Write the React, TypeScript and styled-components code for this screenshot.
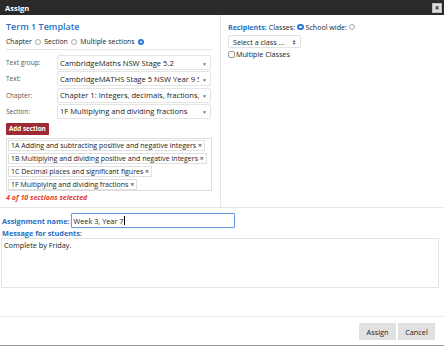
import React from "react";
import styled, { createGlobalStyle } from "styled-components";

const Global = createGlobalStyle`
  html, body { margin: 0; padding: 0; background: #fff; }
  body { font-family: "Open Sans", "Liberation Sans", sans-serif; color: #222; }
  * { box-sizing: border-box; }
`;

const Dialog = styled.div`
  width: 444px;
  height: 346px;
  display: flex;
  flex-direction: column;
  background: #fff;
  border-bottom: 1px solid #9a9a9a;
`;

const TitleBar = styled.div`
  height: 15px;
  background: #2a2a2a;
  display: flex;
  align-items: center;
  justify-content: space-between;
  padding: 0 2px 0 5px;
  color: #fff;
  font-size: 7.5px;
  font-weight: 700;
`;

const CloseBtn = styled.div`
  width: 10px;
  height: 10px;
  background: #dcdcdc;
  border: 1px solid #bbb;
  color: #222;
  font-size: 8px;
  line-height: 8px;
  text-align: center;
  font-weight: 700;
`;

const Top = styled.div`
  display: flex;
  height: 193px;
  border-bottom: 1px solid #e6e6e6;
`;

const LeftPanel = styled.div`
  width: 221px;
  border-right: 1px solid #e6e6e6;
  padding: 6px 9px 0 6px;
  display: flex;
  flex-direction: column;
`;

const Title = styled.div`
  color: #2a70c4;
  font-size: 9px;
  font-weight: 600;
  line-height: 12px;
`;

const RadioRow = styled.div`
  display: flex;
  align-items: center;
  gap: 3px;
  font-size: 6.9px;
  margin-top: 4px;
  padding-bottom: 2px;
  line-height: 10px;
  border-bottom: 1.5px solid #e3e3e3;
  margin-right: -1px;
`;

const Radio = styled.span<{ $on?: boolean }>`
  display: inline-block;
  width: 6.5px;
  height: 6.5px;
  border-radius: 50%;
  border: ${(p) => (p.$on ? "2px solid #2f78d6" : "1px solid #a9a9a9")};
  background: #fff;
  flex: none;
`;

const Form = styled.div`
  display: flex;
  flex-direction: column;
  gap: 1.3px;
  margin-top: 5px;
`;

const FormRow = styled.div`
  display: flex;
  align-items: center;
  height: 15px;
`;

const Label = styled.div`
  width: 51px;
  font-size: 6.5px;
  color: #555;
`;

const Select = styled.div`
  flex: 1;
  height: 15px;
  border: 1px solid #e4e4e4;
  border-radius: 2px;
  display: flex;
  align-items: center;
  padding: 0 3px 0 2px;
  font-size: 7.6px;
  color: #222;
  overflow: hidden;
`;

const SelectText = styled.span`
  flex: 1;
  min-width: 0;
  white-space: nowrap;
  overflow: hidden;
  margin-right: 2px;
`;

const Caret = styled.span`
  flex: none;
  width: 6px;
  text-align: right;
  font-size: 5px;
  color: #777;
  padding-top: 2px;
`;

const AddBtn = styled.div`
  align-self: flex-start;
  margin-top: 4px;
  background: #9e2a33;
  color: #fff;
  font-size: 6.3px;
  font-weight: 700;
  padding: 0 3px;
  height: 12px;
  line-height: 12px;
  border-radius: 1px;
`;

const SectionBox = styled.div`
  margin-top: 3px;
  height: 53px;
  border: 1px solid #dedede;
  padding: 1px 1px;
  display: flex;
  flex-direction: column;
  align-items: flex-start;
  gap: 1.5px;
  margin-right: -1px;
`;

const Tag = styled.div`
  border: 1px solid #e0e0e0;
  font-size: 7px;
  line-height: 9.5px;
  padding: 0 2px;
  white-space: nowrap;
  background: #fff;
`;

const Note = styled.div`
  color: #e23a2c;
  font-size: 7.1px;
  font-weight: 700;
  font-style: italic;
  margin-top: 1px;
`;

const RightPanel = styled.div`
  flex: 1;
  padding: 7px 0 0 7px;
  display: flex;
  flex-direction: column;
  align-items: flex-start;
`;

const RecRow = styled.div`
  display: flex;
  align-items: center;
  gap: 2px;
  font-size: 7.1px;
  line-height: 10px;
`;

const Blue = styled.span`
  color: #2a6ec4;
  font-weight: 700;
`;

const SmallSelect = styled.div`
  margin-top: 3px;
  width: 73px;
  height: 13px;
  border: 1px solid #e2e2e2;
  border-radius: 2px;
  display: flex;
  align-items: center;
  justify-content: space-between;
  padding: 0 4px 0 4px;
  font-size: 7.2px;
`;

const Arrows = styled.span`
  font-size: 4px;
  line-height: 3px;
  display: flex;
  flex-direction: column;
  color: #444;
`;

const CheckRow = styled.div`
  display: flex;
  align-items: center;
  margin-top: 1px;
  font-size: 7.2px;
  line-height: 10px;
`;

const Check = styled.span`
  width: 7px;
  height: 7px;
  border: 1px solid #999;
  border-radius: 2px;
  margin-right: 1px;
`;

const Bottom = styled.div`
  display: flex;
  flex-direction: column;
  padding: 5px 5px 0 1px;
`;

const NameRow = styled.div`
  display: flex;
  align-items: center;
  gap: 1px;
  padding-left: 1px;
`;

const BlueLabel = styled.div`
  color: #2a6ec4;
  font-weight: 700;
  font-size: 7.3px;
  line-height: 10px;
`;

const NameInput = styled.div`
  width: 164px;
  height: 15px;
  border: 1.5px solid #6a9be0;
  border-radius: 1px;
  box-shadow: 0 0 1px #8fb5ea;
  display: flex;
  align-items: center;
  padding-left: 2px;
  font-size: 7.3px;
`;

const Cursor = styled.span`
  display: inline-block;
  width: 1px;
  height: 9px;
  background: #000;
  margin-left: 0.5px;
`;

const MsgLabel = styled(BlueLabel)`
  padding-left: 1px;
`;

const TextArea = styled.div`
  height: 50px;
  border: 1px solid #e4e4e4;
  padding: 1px 2px;
  font-size: 7.3px;
  line-height: 10px;
`;

const Spacer = styled.div`
  flex: 1;
`;

const Footer = styled.div`
  height: 29px;
  border-top: 1px solid #ececec;
  display: flex;
  justify-content: flex-end;
  align-items: flex-start;
  gap: 2px;
  padding: 6px 9px 0 0;
`;

const Button = styled.div`
  width: 37px;
  height: 17px;
  background: #e1e1e1;
  font-size: 7.3px;
  display: flex;
  align-items: center;
  justify-content: center;
  color: #222;
`;

export default function App() {
  const rows = [
    ["Text group:", "CambridgeMaths NSW Stage 5.2"],
    ["Text:", "CambridgeMATHS Stage 5 NSW Year 9 5.1/5.2/5.3"],
    ["Chapter:", "Chapter 1: Integers, decimals, fractions, ratios and rates"],
    ["Section:", "1F Multiplying and dividing fractions"],
  ];
  const tags = [
    "1A Adding and subtracting positive and negative integers",
    "1B Multiplying and dividing positive and negative integers",
    "1C Decimal places and significant figures",
    "1F Multiplying and dividing fractions",
  ];
  return (
    <>
      <Global />
      <Dialog>
        <TitleBar>
          <span>Assign</span>
          <CloseBtn>×</CloseBtn>
        </TitleBar>
        <Top>
          <LeftPanel>
            <Title>Term 1 Template</Title>
            <RadioRow>
              <span>Chapter</span>
              <Radio />
              <span>Section</span>
              <Radio />
              <span>Multiple sections</span>
              <Radio $on />
            </RadioRow>
            <Form>
              {rows.map(([l, v]) => (
                <FormRow key={l}>
                  <Label>{l}</Label>
                  <Select>
                    <SelectText>{v}</SelectText>
                    <Caret>▼</Caret>
                  </Select>
                </FormRow>
              ))}
            </Form>
            <AddBtn>Add section</AddBtn>
            <SectionBox>
              {tags.map((t) => (
                <Tag key={t}>{t} ×</Tag>
              ))}
            </SectionBox>
            <Note>4 of 10 sections selected</Note>
          </LeftPanel>
          <RightPanel>
            <RecRow>
              <Blue>Recipients:</Blue>
              <span>Classes:</span>
              <Radio $on />
              <span>School wide:</span>
              <Radio />
            </RecRow>
            <SmallSelect>
              <span>Select a class ...</span>
              <Arrows>
                <span>▲</span>
                <span>▼</span>
              </Arrows>
            </SmallSelect>
            <CheckRow>
              <Check />
              <span>Multiple Classes</span>
            </CheckRow>
          </RightPanel>
        </Top>
        <Bottom>
          <NameRow>
            <BlueLabel>Assignment name:</BlueLabel>
            <NameInput>
              Week 3, Year 7<Cursor />
            </NameInput>
          </NameRow>
          <MsgLabel>Message for students:</MsgLabel>
          <TextArea>Complete by Friday.</TextArea>
        </Bottom>
        <Spacer />
        <Footer>
          <Button>Assign</Button>
          <Button>Cancel</Button>
        </Footer>
      </Dialog>
    </>
  );
}
